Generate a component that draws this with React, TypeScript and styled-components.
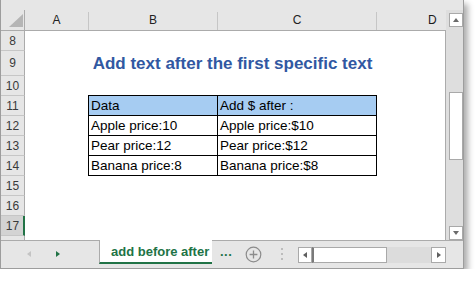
import React from "react";
import styled, { createGlobalStyle } from "styled-components";

const GlobalStyle = createGlobalStyle`
  html, body {
    margin: 0;
    padding: 0;
    background: #ffffff;
  }
  body {
    font-family: "Liberation Sans", Arial, sans-serif;
  }
`;

type Dir = "up" | "down" | "left" | "right";

// colonnes visibles (largeur avec la ligne de droite)
const columns = [
  { label: "A", width: 64 },
  { label: "B", width: 129 },
  { label: "C", width: 159 },
];

const rows = [
  { num: "8", h: 20 },
  { num: "9", h: 25 },
  { num: "10", h: 20 },
  { num: "11", h: 20 },
  { num: "12", h: 20 },
  { num: "13", h: 20 },
  { num: "14", h: 20 },
  { num: "15", h: 20 },
  { num: "16", h: 20 },
  { num: "17", h: 20, selected: true },
  { num: "", h: 4, last: true },
];

const tableData = [
  ["Data", "Add $ after :"],
  ["Apple price:10", "Apple price:$10"],
  ["Pear price:12", "Pear price:$12"],
  ["Banana price:8", "Banana price:$8"],
];

export default function App() {
  return (
    <>
      <GlobalStyle />
      <Frame>
        <TopStrip />
        <Main>
          <Sheet>
            <ColHeaderRow>
              <Corner>
                <CornerMark />
              </Corner>
              {columns.map((c) => (
                <ColHead key={c.label} $w={c.width}>
                  {c.label}
                </ColHead>
              ))}
              <ColHeadLast>D</ColHeadLast>
            </ColHeaderRow>
            <Body>
              <RowHeaders>
                {rows.map((r, i) => (
                  <RowNum key={i} $h={r.h} $selected={!!r.selected} $last={!!r.last}>
                    {r.num}
                  </RowNum>
                ))}
              </RowHeaders>
              <Cells>
                <Spacer $h={20} />
                <TitleRow>Add text after the first specific text</TitleRow>
                <Spacer $h={19} />
                <DataTable>
                  {tableData.map((row, i) =>
                    row.map((cell, j) => (
                      <Cell key={i + "-" + j} $head={i === 0}>
                        {cell}
                      </Cell>
                    ))
                  )}
                </DataTable>
              </Cells>
            </Body>
          </Sheet>
          <VScroll>
            <ScrollBtn>
              <Tri $dir="up" $c="#6b6b6b" />
            </ScrollBtn>
            <VTrack>
              <VThumb />
            </VTrack>
            <ScrollBtn>
              <Tri $dir="down" $c="#6b6b6b" />
            </ScrollBtn>
          </VScroll>
        </Main>
        <TabBar>
          <NavArea>
            <Tri $dir="left" $c="#c4c4c4" />
            <Tri $dir="right" $c="#217346" />
          </NavArea>
          <ActiveTab>add before after</ActiveTab>
          <More>...</More>
          <AddSheet>
            <svg width="17" height="17" viewBox="0 0 17 17">
              <circle cx="8.5" cy="8.5" r="7.3" fill="none" stroke="#8c8c8c" strokeWidth="1.2" />
              <path d="M8.5 4.6v7.8M4.6 8.5h7.8" stroke="#8c8c8c" strokeWidth="1.3" />
            </svg>
          </AddSheet>
          <Divider>
            <Dot />
            <Dot />
            <Dot />
          </Divider>
          <HScroll>
            <HBtn $w={14}>
              <Tri $dir="left" $c="#5f5f5f" />
            </HBtn>
            <HThumb />
            <HTrack />
            <HBtn $w={15}>
              <Tri $dir="right" $c="#5f5f5f" />
            </HBtn>
          </HScroll>
        </TabBar>
      </Frame>
    </>
  );
}

const Frame = styled.div`
  width: 464px;
  height: 269px;
  box-sizing: border-box;
  border: 1px solid #9d9d9d;
  border-top: none;
  background: #e6e6e6;
  box-shadow: 4px 4px 6px rgba(0, 0, 0, 0.32);
  display: flex;
  flex-direction: column;
  overflow: hidden;
`;

const TopStrip = styled.div`
  height: 10px;
  flex-shrink: 0;
`;

const Main = styled.div`
  height: 230px;
  display: flex;
  flex-shrink: 0;
`;

const Sheet = styled.div`
  width: 445px;
  display: flex;
  flex-direction: column;
`;

const ColHeaderRow = styled.div`
  height: 21px;
  box-sizing: border-box;
  border-bottom: 1px solid #ababab;
  display: flex;
  font-size: 12px;
  color: #222;
`;

const Corner = styled.div`
  width: 24px;
  box-sizing: border-box;
  border-right: 1px solid #ababab;
  position: relative;
`;

const CornerMark = styled.div`
  position: absolute;
  right: 1px;
  bottom: 3px;
  width: 0;
  height: 0;
  border-style: solid;
  border-width: 0 0 13px 14px;
  border-color: transparent transparent #b5b5b5 transparent;
`;

const ColHead = styled.div<{ $w: number }>`
  width: ${(p) => p.$w}px;
  box-sizing: border-box;
  border-right: 1px solid #c6c6c6;
  margin-top: 2px;
  display: flex;
  align-items: center;
  justify-content: center;
  padding-bottom: 2px;
`;

const ColHeadLast = styled.div`
  flex: 1;
  padding-left: 51px;
  display: flex;
  align-items: center;
  color: #1a1a1a;
`;

const Body = styled.div`
  flex: 1;
  display: flex;
`;

const RowHeaders = styled.div`
  width: 24px;
  display: flex;
  flex-direction: column;
`;

const RowNum = styled.div<{ $h: number; $selected: boolean; $last: boolean }>`
  height: ${(p) => p.$h}px;
  box-sizing: border-box;
  border-bottom: ${(p) => (p.$last ? "none" : "1px solid #c6c6c6")};
  border-right: ${(p) => (p.$selected ? "2px solid #217346" : "1px solid #ababab")};
  background: ${(p) => (p.$selected ? "#d3d3d3" : "#e6e6e6")};
  display: flex;
  align-items: center;
  justify-content: center;
  padding-left: ${(p) => (p.$selected ? "1px" : "0")};
  font-size: 12px;
  color: #3a3a3a;
`;

const Cells = styled.div`
  flex: 1;
  background: #ffffff;
  border-right: 1px solid #ababab;
  display: flex;
  flex-direction: column;
`;

const Spacer = styled.div<{ $h: number }>`
  height: ${(p) => p.$h}px;
  flex-shrink: 0;
`;

const TitleRow = styled.div`
  height: 25px;
  width: 289px;
  margin-left: 63px;
  line-height: 25px;
  text-align: center;
  font-size: 17px;
  font-weight: bold;
  color: #3158a2;
  white-space: nowrap;
`;

const DataTable = styled.div`
  margin-left: 63px;
  width: 289px;
  box-sizing: border-box;
  display: grid;
  grid-template-columns: 128px 158px;
  grid-auto-rows: 19px;
  gap: 1px;
  padding: 1px;
  background: #000;
`;

const Cell = styled.div<{ $head: boolean }>`
  background: ${(p) => (p.$head ? "#a6ccf2" : "#ffffff")};
  padding-left: 2px;
  line-height: 19px;
  font-size: 13.5px;
  color: #000;
  white-space: nowrap;
  overflow: hidden;
`;

const VScroll = styled.div`
  width: 17px;
  box-sizing: border-box;
  padding: 3px 0 0 3px;
  display: flex;
  flex-direction: column;
  background: #dedede;
`;

const ScrollBtn = styled.div`
  height: 14px;
  box-sizing: border-box;
  border: 1px solid #a9a9a9;
  background: #ffffff;
  display: flex;
  align-items: center;
  justify-content: center;
  flex-shrink: 0;
`;

const VTrack = styled.div`
  flex: 1;
  padding-top: 65px;
`;

const VThumb = styled.div`
  height: 68px;
  box-sizing: border-box;
  border: 1px solid #a9a9a9;
  background: #ffffff;
`;

const Tri = styled.span<{ $dir: Dir; $c: string }>`
  display: block;
  width: 0;
  height: 0;
  border-style: solid;
  ${({ $dir, $c }) => {
    if ($dir === "up")
      return `border-width: 0 3.5px 4px 3.5px; border-color: transparent transparent ${$c} transparent;`;
    if ($dir === "down")
      return `border-width: 4px 3.5px 0 3.5px; border-color: ${$c} transparent transparent transparent;`;
    if ($dir === "left")
      return `border-width: 3.5px 4px 3.5px 0; border-color: transparent ${$c} transparent transparent;`;
    return `border-width: 3.5px 0 3.5px 4px; border-color: transparent transparent transparent ${$c};`;
  }}
`;

const TabBar = styled.div`
  flex: 1;
  border-top: 1px solid #ababab;
  display: flex;
  align-items: flex-start;
`;

const NavArea = styled.div`
  width: 98px;
  height: 25px;
  display: flex;
  align-items: center;
  gap: 25px;
  padding-left: 26px;
  box-sizing: border-box;
`;

const ActiveTab = styled.div`
  width: 113px;
  height: 24px;
  margin-top: -1px;
  box-sizing: border-box;
  background: #ffffff;
  border-left: 1px solid #ababab;
  border-bottom: 2px solid #217346;
  padding-left: 11px;
  padding-top: 1px;
  line-height: 21px;
  font-size: 13px;
  font-weight: bold;
  color: #217346;
  white-space: nowrap;
  overflow: hidden;
`;

const More = styled.div`
  width: 29px;
  padding-left: 8px;
  box-sizing: border-box;
  line-height: 22px;
  font-size: 13px;
  font-weight: bold;
  color: #217346;
  letter-spacing: 0.5px;
`;

const AddSheet = styled.div`
  width: 24px;
  height: 26px;
  display: flex;
  align-items: center;
  justify-content: center;
`;

const Divider = styled.div`
  width: 33px;
  height: 26px;
  display: flex;
  flex-direction: column;
  align-items: center;
  justify-content: center;
  gap: 3px;
`;

const Dot = styled.span`
  width: 2px;
  height: 2px;
  background: #bcbcbc;
`;

const HScroll = styled.div`
  width: 148px;
  height: 16px;
  margin-top: 6px;
  display: flex;
  background: #dcdcdc;
`;

const HBtn = styled.div<{ $w: number }>`
  width: ${(p) => p.$w}px;
  box-sizing: border-box;
  border: 1px solid #a9a9a9;
  background: #ffffff;
  display: flex;
  align-items: center;
  justify-content: center;
`;

const HThumb = styled.div`
  width: 75px;
  box-sizing: border-box;
  border: 1px solid #a9a9a9;
  border-left: 2px solid #7a7a7a;
  background: #ffffff;
`;

const HTrack = styled.div`
  flex: 1;
`;
